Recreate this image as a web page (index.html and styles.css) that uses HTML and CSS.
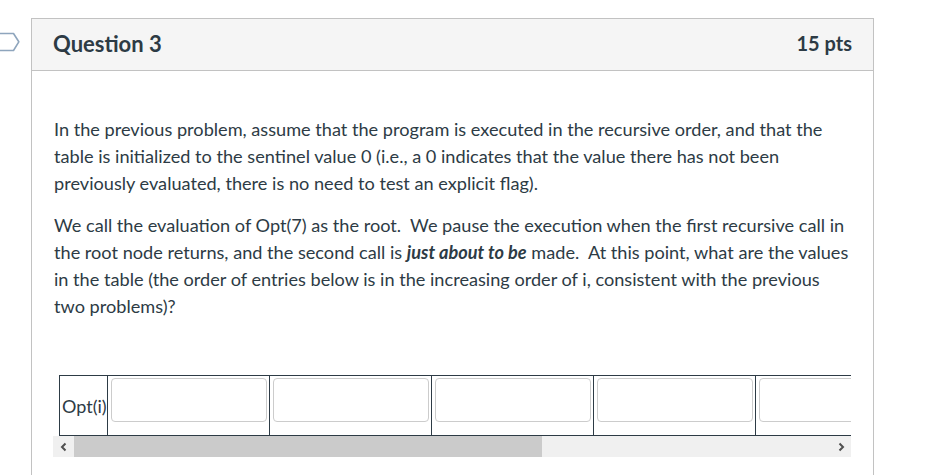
FILE: index.html
```html
<!DOCTYPE html>
<html>
<head>
<meta charset="utf-8">
<link rel="stylesheet" href="styles.css">
</head>
<body>
<div class="page">
  <div class="gutter">
    <svg class="flag" width="31" height="52" viewBox="0 0 31 52">
      <path d="M-5 15.5 H13.5 L18.8 23.8 L13.5 32.5 H-5" fill="none" stroke="#8ea5bd" stroke-width="1.6" stroke-linejoin="round"/>
    </svg>
  </div>
  <div class="question">
    <div class="header">
      <span class="title">Question 3</span>
      <span class="pts">15 pts</span>
    </div>
    <div class="content">
      <p>In the previous problem, assume that the program is executed in the recursive order, and that the table is initialized to the sentinel value 0 (i.e., a 0 indicates that the value there has not been previously evaluated, there is no need to test an explicit flag).</p>
      <p>We call the evaluation of Opt(7) as the root.&nbsp; We pause the execution when the first recursive call in the root node returns, and the second call is <strong><em>just about to be</em></strong> made.&nbsp; At this point, what are the values in the table (the order of entries below is in the increasing order of i, consistent with the previous two problems)?</p>
      <div class="scroller">
        <div class="viewport">
          <table class="grid">
            <tr>
              <td class="label">Opt(i)</td>
              <td class="cell"><input type="text"></td>
              <td class="cell"><input type="text"></td>
              <td class="cell"><input type="text"></td>
              <td class="cell"><input type="text"></td>
              <td class="cell"><input type="text"></td>
              <td class="cell"><input type="text"></td>
              <td class="cell"><input type="text"></td>
            </tr>
          </table>
        </div>
        <div class="scrollbar">
          <div class="sb-btn"><svg width="10" height="10" viewBox="0 0 10 10"><path d="M6.5 1.5 L3 5 L6.5 8.5" fill="none" stroke="#505050" stroke-width="2"/></svg></div>
          <div class="sb-thumb"></div>
          <div class="sb-rest"></div>
          <div class="sb-btn"><svg width="10" height="10" viewBox="0 0 10 10"><path d="M3.5 1.5 L7 5 L3.5 8.5" fill="none" stroke="#505050" stroke-width="2"/></svg></div>
        </div>
      </div>
    </div>
  </div>
</div>
</body>
</html>
```
FILE: styles.css
```css
html, body {
  margin: 0;
  padding: 0;
  background: #fff;
}
body {
  font-family: Lato, "Open Sans", sans-serif;
  color: #2d3b45;
  overflow: hidden;
}
.page {
  display: flex;
  align-items: flex-start;
  padding-top: 18px;
}
.gutter {
  width: 31px;
  flex: none;
}
.flag {
  display: block;
}
.question {
  width: 841px;
  border: 1px solid #c2c2c2;
  border-bottom: none;
  min-height: 480px;
}
.header {
  height: 51px;
  background: #f5f5f5;
  border-bottom: 1px solid #c2c2c2;
  display: flex;
  align-items: center;
  justify-content: space-between;
  padding: 0 21px 0 21px;
  font-weight: 700;
}
.title {
  font-size: 22px;
  margin-top: -3px;
}
.pts {
  font-size: 20px;
  margin-top: -3px;
}
.content {
  padding: 45px 21px 0 22px;
  font-size: 18.15px;
  line-height: 27px;
}
.content p {
  margin: 0 0 15px 0;
}
.scroller {
  margin-top: 55px;
  margin-left: -1px;
  width: 798px;
}
.viewport {
  overflow: hidden;
  padding-left: 6px;
}
.grid {
  border-collapse: collapse;
  border: 1px solid #2d3b45;
  table-layout: fixed;
}
.grid td {
  border: 1px solid #2d3b45;
  padding: 0;
}
.label {
  width: 47px;
  padding: 0 0 0 2px !important;
  font-size: 18px;
  line-height: 20px;
  vertical-align: middle;
  white-space: nowrap;
}
.cell {
  width: 161px;
  min-width: 161px;
  vertical-align: top;
}
.cell input {
  display: block;
  box-sizing: border-box;
  width: 156px;
  height: 44px;
  margin: 2px 0 13px 3px;
  border: 1px solid #cccccc;
  border-radius: 4px;
  background: #fff;
  outline: none;
}
.scrollbar {
  display: flex;
  height: 21px;
  background: #f0f0f0;
}
.sb-btn {
  width: 21px;
  flex: none;
  display: flex;
  align-items: center;
  justify-content: center;
}
.sb-thumb {
  width: 468px;
  flex: none;
  background: #cbcbcb;
}
.sb-rest {
  flex: 1;
}
```
